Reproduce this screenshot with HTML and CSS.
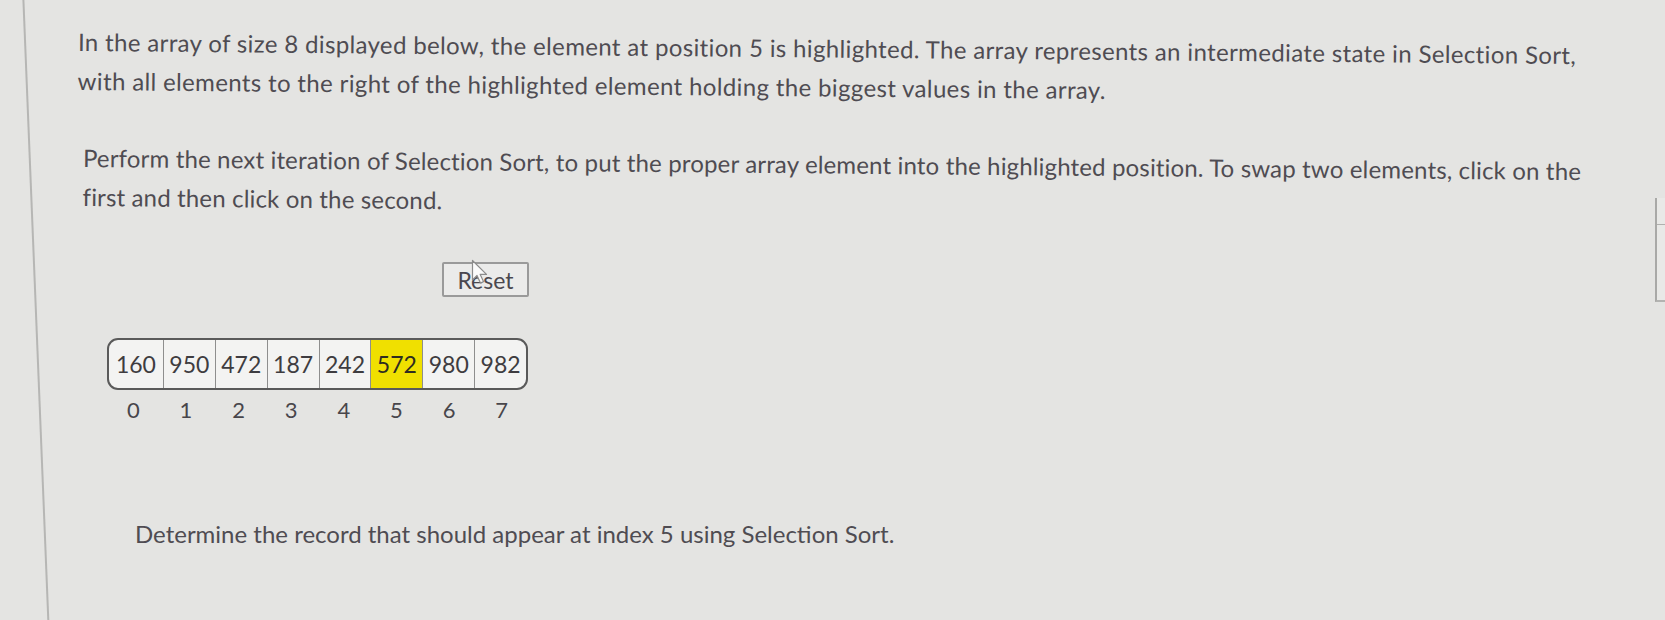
FILE: index.html
```html
<!DOCTYPE html>
<html lang="en">
<head>
<meta charset="utf-8">
<title>Selection Sort</title>
<link rel="stylesheet" href="styles.css">
</head>
<body>
<div class="edge-line"></div>
<div class="side-tab"></div>
<main class="page">
  <p class="q q1">In the array of size 8 displayed below, the element at position 5 is highlighted. The array represents an intermediate state in Selection Sort,<br>with all elements to the right of the highlighted element holding the biggest values in the array.</p>
  <p class="q q2">Perform the next iteration of Selection Sort, to put the proper array element into the highlighted position. To swap two elements, click on the<br>first and then click on the second.</p>
  <div class="controls">
    <button class="reset" type="button">Reset</button>
    <svg class="cursor" width="20" height="26" viewBox="0 0 20 26"><path d="M1.5 1.5 L1.5 21 L6 16.5 L9.5 24 L12.5 22.6 L9.2 15.4 L15.5 15.4 Z" fill="#fbfbfb" stroke="#8c8c8c" stroke-width="1.2" stroke-linejoin="round"/></svg>
  </div>
  <div class="array-block">
    <div class="array">
      <div class="cell">160</div>
      <div class="cell">950</div>
      <div class="cell">472</div>
      <div class="cell">187</div>
      <div class="cell">242</div>
      <div class="cell hl">572</div>
      <div class="cell">980</div>
      <div class="cell">982</div>
    </div>
    <div class="indices">
      <span>0</span><span>1</span><span>2</span><span>3</span><span>4</span><span>5</span><span>6</span><span>7</span>
    </div>
  </div>
  <p class="prompt">Determine the record that should appear at index 5 using Selection Sort.</p>
</main>
</body>
</html>
```
FILE: styles.css
```css
html, body {
  margin: 0;
  padding: 0;
}
body {
  width: 1665px;
  height: 620px;
  overflow: hidden;
  background: #e4e4e2;
  color: #4f4c52;
  font-family: Lato, "Liberation Sans", Arial, sans-serif;
  font-size: 24px;
  position: relative;
}
.page {
  padding: 22px 0 0 78px;
}
.q {
  margin: 0;
  line-height: 39px;
  white-space: nowrap;
  transform: rotate(0.5deg);
  transform-origin: 0 20px;
}
.q1 {
  letter-spacing: 0.36px;
}
.q2 {
  margin-top: 38px;
  padding-left: 5px;
  letter-spacing: 0.16px;
}
.controls {
  margin-top: 46px;
  padding-left: 364px;
  position: relative;
  height: 35px;
}
.reset {
  box-sizing: border-box;
  width: 87px;
  height: 35px;
  padding: 0;
  font: inherit;
  font-size: 23px;
  color: #4a474e;
  background: #ebebea;
  border: 2px solid #9a9a9a;
  border-radius: 2px;
}
.cursor {
  position: absolute;
  left: 393px;
  top: -3px;
}
.array-block {
  margin-top: 41px;
  margin-left: 29px;
  width: 421px;
}
.array {
  display: flex;
  box-sizing: border-box;
  height: 52px;
  border: 2px solid #5a5a5a;
  border-radius: 11px;
  overflow: hidden;
  background: #f3f3f2;
}
.cell {
  flex: 1;
  display: flex;
  align-items: center;
  justify-content: center;
  border-left: 1px solid #8e8e8e;
  color: #3e3c40;
  font-size: 23px;
}
.cell:first-child {
  border-left: none;
  flex: 1.06;
}
.cell.hl {
  background: #f0e000;
  color: #2e2c20;
}
.indices {
  display: flex;
  margin-top: 5px;
  line-height: 30px;
  font-size: 22px;
  color: #48464b;
}
.indices span {
  flex: 1;
  text-align: center;
}
.prompt {
  margin: 89px 0 0 57px;
  line-height: 39px;
}
.edge-line {
  position: absolute;
  left: 22px;
  top: -10px;
  width: 2px;
  height: 650px;
  background: #b6b6b4;
  transform: rotate(-2.3deg);
  transform-origin: top left;
}
.side-tab {
  position: absolute;
  left: 1655px;
  top: 198px;
  width: 12px;
  height: 102px;
  border-left: 2px solid #a9a9a7;
  border-bottom: 2px solid #b3b3b1;
  background: #e9e9e7;
}
.side-tab::after {
  content: "";
  position: absolute;
  left: 0;
  right: 0;
  top: 26px;
  border-top: 1px solid #b0b0ae;
}
```
